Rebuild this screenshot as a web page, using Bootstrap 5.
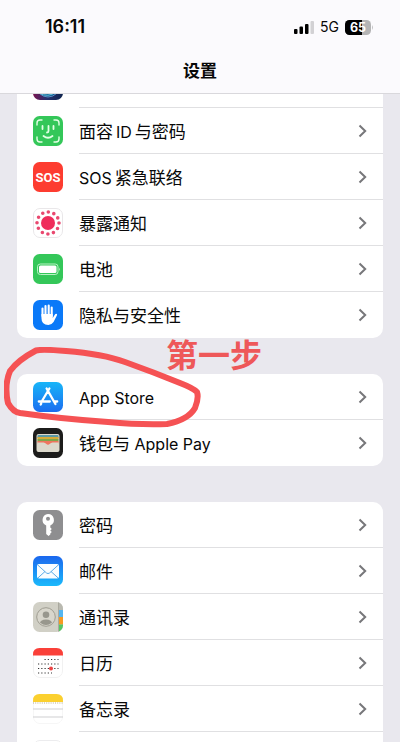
<!DOCTYPE html>
<html lang="zh-CN" class="h-100">
<head>
<meta charset="utf-8">
<meta name="viewport" content="width=device-width, initial-scale=1">
<title>设置</title>
<link href="https://cdn.jsdelivr.net/npm/bootstrap@5.3.0/dist/css/bootstrap.min.css" rel="stylesheet">
<style>
  body { background: #e9e8ee; color: #080808; font-family: Inter, "Noto Sans CJK SC", sans-serif; font-size: 17px; line-height: 24px; }
  .top-bar { background: #fbfafd; border-bottom: 1px solid #d9d8dc; z-index: 5; }
  .status { padding: 15px 27px 0 45px; height: 49px; }
  .indicators { gap: 6px; }
  .clock { font-size: 18px; font-weight: 600; }
  .network { font-size: 14px; }
  .page-title { font-size: 17px; font-weight: 700; line-height: 24px; padding: 10px 0; }
  .groups { padding: 0 17px; gap: 36px; }
  .scrolled { margin-top: -32px; }
  .setting-list { background: #fff; border-radius: 10px; }
  .setting { height: 46px; padding-left: 16px; gap: 16px; color: inherit; text-decoration: none; }
  .setting > svg { width: 30px; height: 30px; flex: none; }
  .setting-text { border-bottom: 1px solid #e0e0e2; padding-right: 16px; }
  .setting:last-of-type .setting-text { border-bottom: 0; }
  .setting-name { padding-top: 2px; }
  .latin { font-size: 16px; }
  .latin-mid { margin: 0 3px; }
  .latin-start { margin-right: 3px; }
  .chevron { width: 9px; height: 14px; fill: none; stroke: #77777a; stroke-width: 2; }
  .ring { left: -13px; top: -27px; width: 200px; height: 84px; pointer-events: none; z-index: 2; }
  .step-note { left: 149px; top: -42px; font-size: 32px; line-height: 48px; font-weight: 700; color: #ee5859; z-index: 2; }
</style>
<script src="https://cdn.jsdelivr.net/npm/bootstrap@5.3.0/dist/js/bootstrap.bundle.min.js"></script>
</head>
<body class="vh-100 overflow-hidden d-flex flex-column">
<svg class="d-none" aria-hidden="true">
  <symbol id="chev" viewBox="0 0 9 14"><path d="M1.5 1.500 7.200 7 1.500 12.500"/></symbol>
</svg>

<header class="top-bar position-relative flex-shrink-0">
  <div class="status d-flex justify-content-between">
    <span class="clock">16:11</span>
    <div class="indicators d-flex align-items-center align-self-start">
      <svg width="20" height="13" viewBox="0 0 20 13" role="img" aria-label="信号"><rect y="8" width="3.500" height="5" rx="1"/><rect x="5.500" y="5.500" width="3.500" height="7.500" rx="1"/><rect x="11" y="3" width="3.500" height="10" rx="1"/><rect x="16.500" width="3.500" height="13" rx="1" fill="#d2d1d4"/></svg>
      <span class="network">5G</span>
      <svg width="28" height="15" viewBox="0 0 28 15" role="img" aria-label="电量 65%"><defs><clipPath id="cell"><rect width="26" height="15" rx="4.500"/></clipPath></defs><g clip-path="url(#cell)"><rect width="26" height="15" fill="#b4b4b5"/><rect width="17" height="15"/></g><path d="M27 5v5q1.500-2.500 0-5" fill="#b4b4b5"/><text x="13" y="12" text-anchor="middle" font-size="12.500" font-weight="700" fill="#fff">65</text></svg>
    </div>
  </div>
  <h1 class="page-title text-center m-0">设置</h1>
</header>

<main class="groups flex-grow-1 overflow-hidden d-flex flex-column">
  <nav class="setting-list scrolled flex-shrink-0" aria-label="系统">
    <a href="#" class="setting d-flex align-items-center" aria-label="Siri与搜索">
      <svg viewBox="0 0 30 30"><defs><linearGradient id="siri"><stop stop-color="#7a1450"/><stop offset=".45" stop-color="#27306e"/><stop offset="1" stop-color="#10254f"/></linearGradient></defs><rect width="30" height="30" rx="7" fill="url(#siri)"/><circle cx="15" cy="15" r="12" fill="#16598f" stroke="#5a8fc4"/><path d="M6 23q9 5 17-1" stroke="#62c5dc" fill="none"/></svg>
      <span class="setting-text flex-grow-1 h-100"></span>
    </a>
    <a href="#" class="setting d-flex align-items-center">
      <svg viewBox="0 0 30 30"><rect width="30" height="30" rx="6.500" fill="#34c759"/><g fill="none" stroke="#e3ffe5" stroke-width="1.400" stroke-linecap="round"><path d="M4 9V7q0-3 3-3h2M21 4h2q3 0 3 3v2M26 21v2q0 3-3 3h-2M9 26H7q-3 0-3-3v-2"/><path d="M9.500 10v3M20.500 10v3M15.500 10v5q0 1.500-1.500 1.500M10.500 20q4.500 3.600 9 0" stroke-width="1.800"/></g></svg>
      <span class="setting-text d-flex align-items-center justify-content-between flex-grow-1 h-100"><span class="setting-name">面容<span class="latin latin-mid">ID</span>与密码</span><svg class="chevron"><use href="#chev"/></svg></span>
    </a>
    <a href="#" class="setting d-flex align-items-center">
      <svg viewBox="0 0 30 30"><rect width="30" height="30" rx="6.500" fill="#fd3c30"/><text x="15" y="20" text-anchor="middle" font-family="Roboto, sans-serif" font-size="13" font-weight="700" fill="#fff">SOS</text></svg>
      <span class="setting-text d-flex align-items-center justify-content-between flex-grow-1 h-100"><span class="setting-name"><span class="latin latin-start">SOS</span>紧急联络</span><svg class="chevron"><use href="#chev"/></svg></span>
    </a>
    <a href="#" class="setting d-flex align-items-center">
      <svg viewBox="0 0 30 30"><rect x=".5" y=".5" width="29" height="29" rx="6.500" fill="#fff" stroke="#e9e7e9"/><circle cx="15" cy="15" r="7" fill="#ef2d5b"/><circle cx="15" cy="15" r="11" fill="none" stroke="#e9486f" stroke-width="3.600" stroke-linecap="round" stroke-dasharray="0 5.760"/></svg>
      <span class="setting-text d-flex align-items-center justify-content-between flex-grow-1 h-100"><span class="setting-name">暴露通知</span><svg class="chevron"><use href="#chev"/></svg></span>
    </a>
    <a href="#" class="setting d-flex align-items-center">
      <svg viewBox="0 0 30 30"><rect width="30" height="30" rx="6.500" fill="#34c759"/><rect x="4.500" y="10" width="20.500" height="10.500" rx="2.800" fill="none" stroke="#b9f3c5"/><rect x="6" y="11.500" width="17.500" height="7.500" rx="1.500" fill="#fff"/><path d="M26.300 13.500v3.500q1.500-1.700 0-3.500" fill="#d5f8dc"/></svg>
      <span class="setting-text d-flex align-items-center justify-content-between flex-grow-1 h-100"><span class="setting-name">电池</span><svg class="chevron"><use href="#chev"/></svg></span>
    </a>
    <a href="#" class="setting d-flex align-items-center">
      <svg viewBox="0 0 30 30"><rect width="30" height="30" rx="6.500" fill="#0a79f8"/><g stroke="#fff" stroke-width="2.100" stroke-linecap="round" fill="none"><path d="M9.500 16V8.500M12.500 15V6M15.700 15V5.500M18.700 16V7.500"/></g><path d="M8.450 14h11.300v4l2-3.300q1-1.300 2.100-.6.500.4 0 1.400l-3.300 6.500Q18.500 25 15.400 25 8.450 25 8.450 18z" fill="#fff"/></svg>
      <span class="setting-text d-flex align-items-center justify-content-between flex-grow-1 h-100"><span class="setting-name">隐私与安全性</span><svg class="chevron"><use href="#chev"/></svg></span>
    </a>
  </nav>

  <nav class="setting-list position-relative flex-shrink-0" aria-label="商店与钱包">
    <a href="#" class="setting d-flex align-items-center">
      <svg viewBox="0 0 30 30"><defs><linearGradient id="store" x2="0" y2="1"><stop stop-color="#18b5f8"/><stop offset="1" stop-color="#1b6df0"/></linearGradient></defs><rect width="30" height="30" rx="6.500" fill="url(#store)"/><g stroke="#fff" stroke-width="2.300" stroke-linecap="round"><path d="M16.400 6.500 9.300 18.500M13.600 6.500 22.400 22M5.800 19.500h11M21 19.500h3.200M8.200 21.600l-.5.900"/></g></svg>
      <span class="setting-text d-flex align-items-center justify-content-between flex-grow-1 h-100"><span class="setting-name latin">App Store</span><svg class="chevron"><use href="#chev"/></svg></span>
    </a>
    <a href="#" class="setting d-flex align-items-center">
      <svg viewBox="0 0 30 30"><rect width="30" height="30" rx="6.500" fill="#1c1c1b"/><rect x="3.500" y="6" width="23" height="18" rx="2" fill="#dcd9cc"/><path d="M4.500 8q0-1 1-1h19q1 0 1 1v2h-21z" fill="#5b9aa6"/><path d="M4.500 9h21v2.500h-21z" fill="#d8ab38"/><path d="M4.500 11h21v2.500h-21z" fill="#80a54a"/><path d="M4.500 13h21v2.500h-21z" fill="#ee765f"/><path d="M4.500 14.500h6q1.300 0 2 1 2.500 2.800 5 0 .7-1 2-1h6v7.500q0 1-1 1h-19q-1 0-1-1z" fill="#dcd9cc"/><path d="M11 14h8q-1.300.5-2 1.500-2 2.400-4 0-.7-1-2-1.500" fill="#ee765f"/></svg>
      <span class="setting-text d-flex align-items-center justify-content-between flex-grow-1 h-100"><span class="setting-name">钱包与<span class="latin"> Apple Pay</span></span><svg class="chevron"><use href="#chev"/></svg></span>
    </a>
    <svg class="ring position-absolute" viewBox="4 347 200 84" fill="none" stroke="#f55254" stroke-width="6" stroke-linecap="round" stroke-linejoin="round" aria-hidden="true"><path d="M20 413Q13 412 8 403Q4 385 10 371Q18 360 36 350.500Q42 349 66 351Q103 354 125 362Q153 372 180 383Q193 388 197 392Q199 398 195 408Q188 420 167 424Q140 425 108 422Q63 419 20 413"/></svg>
    <span class="step-note position-absolute text-nowrap">第一步</span>
  </nav>

  <nav class="setting-list flex-shrink-0" aria-label="应用">
    <a href="#" class="setting d-flex align-items-center">
      <svg viewBox="0 0 30 30"><rect width="30" height="30" rx="6.500" fill="#8e8e90"/><path fill="#fff" fill-rule="evenodd" d="M15 4a6 6 0 0 1 2.300 11.500v2l1.500 1.500-1.500 1.500 1.500 1.500-1.500 1.500v1L15.500 26 13.200 24v-8.500A6 6 0 0 1 15 4m0 2.800a2 2 0 1 0 0 4 2 2 0 0 0 0-4"/></svg>
      <span class="setting-text d-flex align-items-center justify-content-between flex-grow-1 h-100"><span class="setting-name">密码</span><svg class="chevron"><use href="#chev"/></svg></span>
    </a>
    <a href="#" class="setting d-flex align-items-center">
      <svg viewBox="0 0 30 30"><defs><linearGradient id="mail" x2="0" y2="1"><stop stop-color="#1b67ee"/><stop offset="1" stop-color="#1bb9fb"/></linearGradient></defs><rect width="30" height="30" rx="6.500" fill="url(#mail)"/><rect x="4" y="8" width="22" height="14.500" rx="2" fill="#f9fdff"/><path d="m4.500 8.800 9 8.200q1.500 1.200 3 0l9-8.200M4.800 22l7.200-6.500M25.200 22 18 15.500" fill="none" stroke="#4aa3e4" stroke-width=".9"/></svg>
      <span class="setting-text d-flex align-items-center justify-content-between flex-grow-1 h-100"><span class="setting-name">邮件</span><svg class="chevron"><use href="#chev"/></svg></span>
    </a>
    <a href="#" class="setting d-flex align-items-center">
      <svg viewBox="0 0 30 30"><defs><clipPath id="book"><rect width="30" height="30" rx="6.500"/></clipPath><clipPath id="face"><circle cx="13" cy="15" r="8"/></clipPath></defs><g clip-path="url(#book)"><path d="M0 0h30v30H0z" fill="#d1d0c6"/><path d="M26 0h4v8h-4z" fill="#b9b9b0"/><path d="M26 8h4v7h-4z" fill="#54b6f0"/><path d="M26 15h4v7.500h-4z" fill="#f59a22"/><path d="M26 22.500h4V30h-4z" fill="#55c763"/><path d="M25.500 0v30" stroke="#aaa99f"/></g><circle cx="13" cy="15" r="9.300" fill="#d8d6cc" stroke="#98968b" stroke-width=".9"/><g fill="#98978d" clip-path="url(#face)"><circle cx="13" cy="12.800" r="3.300"/><ellipse cx="13" cy="21.800" rx="6.500" ry="4.300"/></g></svg>
      <span class="setting-text d-flex align-items-center justify-content-between flex-grow-1 h-100"><span class="setting-name">通讯录</span><svg class="chevron"><use href="#chev"/></svg></span>
    </a>
    <a href="#" class="setting d-flex align-items-center">
      <svg viewBox="0 0 30 30"><rect x=".5" y=".5" width="29" height="29" rx="6.500" fill="#fff" stroke="#f1f1f1"/><path d="M0 7.500V6.500Q0 0 6.500 0h17Q30 0 30 6.500v1z" fill="#fa4039"/><g stroke="#333" stroke-width="1.200" stroke-dasharray="1.200 2.050"><path d="M11.500 11.500h14M5 16h20.500M5 20.500h20.500M5 25h14"/></g><circle cx="18" cy="20.500" r="2" fill="#ed4444"/></svg>
      <span class="setting-text d-flex align-items-center justify-content-between flex-grow-1 h-100"><span class="setting-name">日历</span><svg class="chevron"><use href="#chev"/></svg></span>
    </a>
    <a href="#" class="setting d-flex align-items-center">
      <svg viewBox="0 0 30 30"><rect x=".5" y=".5" width="29" height="29" rx="6.500" fill="#fff" stroke="#f6f6f6"/><path d="M0 8V6.500Q0 0 6.500 0h17Q30 0 30 6.500V8z" fill="#fbd02f"/><path d="M0 9h30" stroke="#b7ac88" stroke-dasharray="1 1.200"/><path d="M0 15h30M0 23h30" stroke="#cfcfd1"/></svg>
      <span class="setting-text d-flex align-items-center justify-content-between flex-grow-1 h-100"><span class="setting-name">备忘录</span><svg class="chevron"><use href="#chev"/></svg></span>
    </a>
    <a href="#" class="setting d-flex align-items-center" aria-label="提醒事项">
      <svg viewBox="0 0 30 30"><rect x=".5" y=".5" width="29" height="29" rx="6.500" fill="#fff" stroke="#ececee"/></svg>
      <span class="setting-text flex-grow-1 h-100"></span>
    </a>
  </nav>
</main>
</body>
</html>
